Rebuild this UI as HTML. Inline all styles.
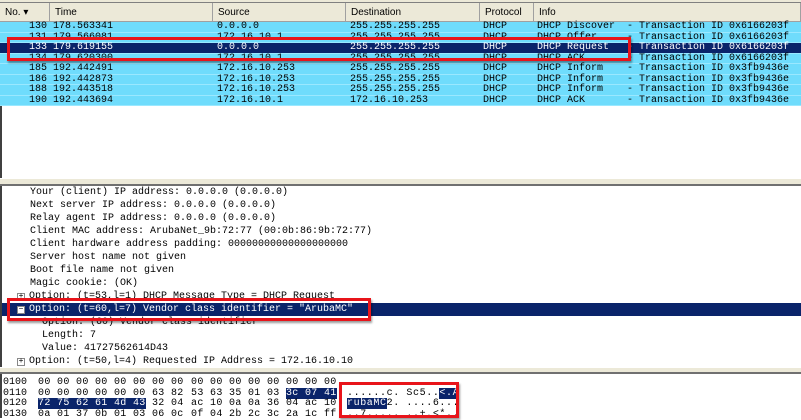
<!DOCTYPE html>
<html><head><style>
*{margin:0;padding:0;box-sizing:border-box}
body{width:801px;height:418px;overflow:hidden;background:#fff;position:relative;font-family:"Liberation Mono",monospace;font-size:10px;color:#000}
.hdr{position:absolute;top:3px;height:19px;background:#ece9d8;border-right:1px solid #a0a0a0;border-bottom:1px solid #a0a0a0;font-family:"Liberation Sans",sans-serif;font-size:10px;line-height:19px;padding-left:5px}
.row{position:absolute;left:0;width:801px;height:10.5px;background:#6fdcfc;border-bottom:1px solid #9ae8ff;line-height:10px}
.row span{position:absolute;white-space:pre}
.sel{background:#0a246a;color:#fff}
.red{position:absolute;border:3px solid #e8141a;box-shadow:1px 2px 2px rgba(0,0,0,.4)}
.d{position:absolute;white-space:pre;line-height:13px;height:13px}
.box{position:absolute;width:8px;height:8px;border:1px solid #888;background:#fff;font-size:8px;line-height:6px;text-align:center;color:#000}
.hx{position:absolute;white-space:pre;line-height:10.5px;height:10.5px;letter-spacing:0.33px}
.hl{background:#0a246a;color:#fff}
</style></head><body>
<div style="position:absolute;left:0;top:0;width:801px;height:3px;background:#ece9d8;border-bottom:1px solid #808080"></div>
<div style="position:absolute;left:0;top:3px;width:2px;height:175px;background:#404040"></div>
<div class="hdr" style="left:0;width:50px">No. ▾</div>
<div class="hdr" style="left:50px;width:163px">Time</div>
<div class="hdr" style="left:213px;width:133px">Source</div>
<div class="hdr" style="left:346px;width:134px">Destination</div>
<div class="hdr" style="left:480px;width:54px">Protocol</div>
<div class="hdr" style="left:534px;width:267px">Info</div>

<div class="row" style="top:22px"><span style="left:29px">130 178.563341</span><span style="left:217px">0.0.0.0</span><span style="left:350px">255.255.255.255</span><span style="left:483px">DHCP</span><span style="left:537px">DHCP Discover  - Transaction ID 0x6166203f</span></div>
<div class="row" style="top:32.5px"><span style="left:29px">131 179.566081</span><span style="left:217px">172.16.10.1</span><span style="left:350px">255.255.255.255</span><span style="left:483px">DHCP</span><span style="left:537px">DHCP Offer     - Transaction ID 0x6166203f</span></div>
<div class="row sel" style="top:43px"><span style="left:29px">133 179.619155</span><span style="left:217px">0.0.0.0</span><span style="left:350px">255.255.255.255</span><span style="left:483px">DHCP</span><span style="left:537px">DHCP Request   - Transaction ID 0x6166203f</span></div>
<div class="row" style="top:53.5px"><span style="left:29px">134 179.620300</span><span style="left:217px">172.16.10.1</span><span style="left:350px">255.255.255.255</span><span style="left:483px">DHCP</span><span style="left:537px">DHCP ACK       - Transaction ID 0x6166203f</span></div>
<div class="row" style="top:64px"><span style="left:29px">185 192.442491</span><span style="left:217px">172.16.10.253</span><span style="left:350px">255.255.255.255</span><span style="left:483px">DHCP</span><span style="left:537px">DHCP Inform    - Transaction ID 0x3fb9436e</span></div>
<div class="row" style="top:74.5px"><span style="left:29px">186 192.442873</span><span style="left:217px">172.16.10.253</span><span style="left:350px">255.255.255.255</span><span style="left:483px">DHCP</span><span style="left:537px">DHCP Inform    - Transaction ID 0x3fb9436e</span></div>
<div class="row" style="top:85px"><span style="left:29px">188 192.443518</span><span style="left:217px">172.16.10.253</span><span style="left:350px">255.255.255.255</span><span style="left:483px">DHCP</span><span style="left:537px">DHCP Inform    - Transaction ID 0x3fb9436e</span></div>
<div class="row" style="top:95.5px"><span style="left:29px">190 192.443694</span><span style="left:217px">172.16.10.1</span><span style="left:350px">172.16.10.253</span><span style="left:483px">DHCP</span><span style="left:537px">DHCP ACK       - Transaction ID 0x3fb9436e</span></div>
<div class="red" style="left:7px;top:37px;width:624px;height:24px"></div>

<div style="position:absolute;left:0;top:178px;width:801px;height:8px;background:#ece9d8;border-top:1px solid #fff;border-bottom:2px solid #707070"></div>
<div style="position:absolute;left:0;top:186px;width:2px;height:182px;background:#404040"></div>

<div class="d" style="left:30px;top:186px">Your (client) IP address: 0.0.0.0 (0.0.0.0)</div>
<div class="d" style="left:30px;top:199px">Next server IP address: 0.0.0.0 (0.0.0.0)</div>
<div class="d" style="left:30px;top:212px">Relay agent IP address: 0.0.0.0 (0.0.0.0)</div>
<div class="d" style="left:30px;top:225px">Client MAC address: ArubaNet_9b:72:77 (00:0b:86:9b:72:77)</div>
<div class="d" style="left:30px;top:238px">Client hardware address padding: 00000000000000000000</div>
<div class="d" style="left:30px;top:251px">Server host name not given</div>
<div class="d" style="left:30px;top:264px">Boot file name not given</div>
<div class="d" style="left:30px;top:277px">Magic cookie: (OK)</div>
<div class="box" style="left:17px;top:293px">+</div>
<div class="d" style="left:29px;top:290px">Option: (t=53,l=1) DHCP Message Type = DHCP Request</div>
<div style="position:absolute;left:2px;top:303px;width:799px;height:13px;background:#0a246a"></div>
<div class="box" style="left:17px;top:306px">−</div>
<div class="d" style="left:29px;top:303px;color:#fff">Option: (t=60,l=7) Vendor class identifier = "ArubaMC"</div>
<div class="d" style="left:42px;top:316px">Option: (60) Vendor class identifier</div>
<div class="d" style="left:42px;top:329px">Length: 7</div>
<div class="d" style="left:42px;top:342px">Value: 41727562614D43</div>
<div class="box" style="left:17px;top:358px">+</div>
<div class="d" style="left:29px;top:355px">Option: (t=50,l=4) Requested IP Address = 172.16.10.10</div>
<div class="red" style="left:7px;top:298px;width:364px;height:23px"></div>

<div style="position:absolute;left:0;top:367px;width:801px;height:7px;background:#ece9d8;border-top:1px solid #fff;border-bottom:2px solid #707070"></div>
<div style="position:absolute;left:0;top:374px;width:2px;height:44px;background:#404040"></div>

<div class="hx" style="left:3px;top:378px;letter-spacing:0">0100</div>
<div class="hx" style="left:3px;top:388.5px;letter-spacing:0">0110</div>
<div class="hx" style="left:3px;top:399px;letter-spacing:0">0120</div>
<div class="hx" style="left:3px;top:409.5px;letter-spacing:0">0130</div>

<div class="hx" style="left:38px;top:378px">00 00 00 00 00 00 00 00</div>
<div class="hx" style="left:38px;top:388.5px">00 00 00 00 00 00 63 82</div>
<div class="hx" style="left:38px;top:399px"><span class="hl">72 75 62 61 4d 43</span> 32 04</div>
<div class="hx" style="left:38px;top:409.5px">0a 01 37 0b 01 03 06 0c</div>

<div class="hx" style="left:191px;top:378px">00 00 00 00 00 00 00 00</div>
<div class="hx" style="left:191px;top:388.5px">53 63 35 01 03 <span class="hl">3c 07 41</span></div>
<div class="hx" style="left:191px;top:399px">ac 10 0a 0a 36 04 ac 10</div>
<div class="hx" style="left:191px;top:409.5px">0f 04 2b 2c 3c 2a 1c ff</div>

<div class="hx" style="left:347px;top:378px;letter-spacing:0.6px">........ ........</div>
<div class="hx" style="left:347px;top:388.5px;letter-spacing:0.6px">......c. Sc5..<span class="hl">&lt;.A</span></div>
<div class="hx" style="left:347px;top:399px;letter-spacing:0.6px"><span class="hl">rubaMC</span>2. ....6...</div>
<div class="hx" style="left:347px;top:409.5px;letter-spacing:0.6px">..7..... ..+,&lt;*..</div>
<div class="red" style="left:339px;top:382px;width:120px;height:36px"></div>
</body></html>
